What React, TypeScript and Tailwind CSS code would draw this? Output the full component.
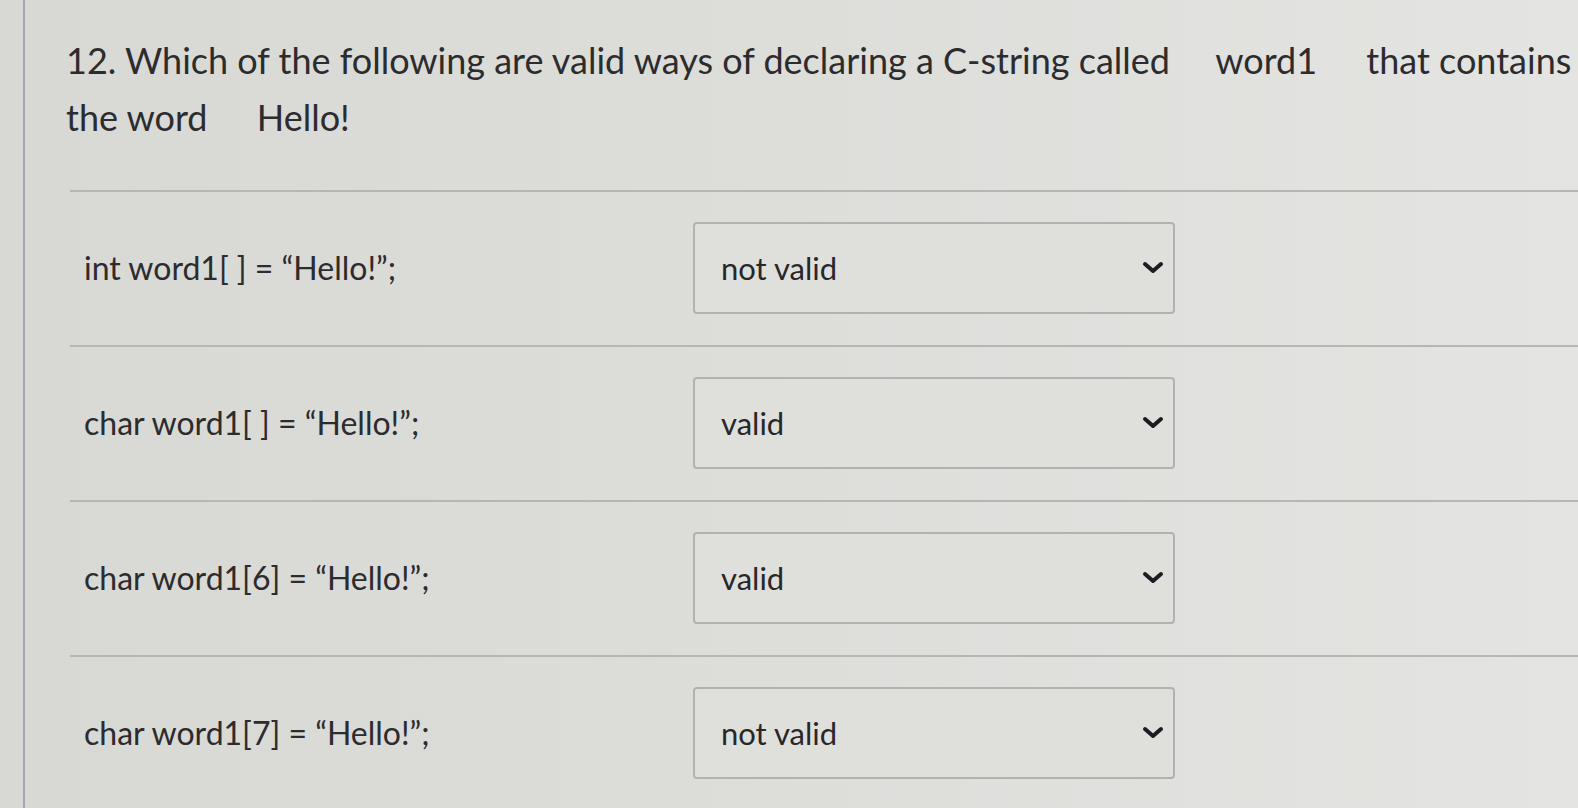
import React from "react";

const rows = [
  { code: "int word1[ ] = \u201CHello!\u201D;", value: "not valid" },
  { code: "char word1[ ] = \u201CHello!\u201D;", value: "valid" },
  { code: "char word1[6] = \u201CHello!\u201D;", value: "valid" },
  { code: "char word1[7] = \u201CHello!\u201D;", value: "not valid" },
];

function Chevron() {
  return (
    <svg width="22" height="14" viewBox="0 0 22 14" className="shrink-0">
      <polyline
        points="3,3 11,10 19,3"
        fill="none"
        stroke="#1c1c22"
        strokeWidth="4"
        strokeLinecap="round"
        strokeLinejoin="round"
      />
    </svg>
  );
}

export default function App() {
  return (
    <div className="w-[1578px] h-[808px] overflow-hidden flex bg-linear-to-r from-[#d8d8d4] via-[#dddddA] to-[#e4e4e2] text-[#2c2c2e] font-['Lato','Liberation_Sans',sans-serif]">
      <div className="w-[25px] shrink-0 border-r-2 border-[#a4a4aa]" />
      <div className="flex-1 pl-[41px] pt-[32px]">
        <div className="text-[36px] leading-[57px]">
          <div className="whitespace-nowrap">
            12. Which of the following are valid ways of declaring a C-string called{" "}
            <span className="ml-[36px] mr-[40px]">word1</span> that contains
          </div>
          <div className="whitespace-nowrap">
            the word <span className="ml-[40px]">Hello!</span>
          </div>
        </div>
        <div className="mt-[44px] ml-[4px]">
          {rows.map((r, i) => (
            <div
              key={i}
              className="border-t-2 border-[#b6b6b2] pl-[14px] pt-[30px] pb-[31px] flex items-center"
            >
              <div className="w-[609px] shrink-0 text-[32px] whitespace-nowrap">
                {r.code}
              </div>
              <div className="w-[482px] h-[92px] border-2 border-[#b2b2ae] rounded-[4px] bg-[#dfdfdb] flex items-center justify-between pl-[26px] pr-[9px]">
                <span className="text-[31px] text-[#27272a]">{r.value}</span>
                <Chevron />
              </div>
            </div>
          ))}
        </div>
      </div>
    </div>
  );
}
